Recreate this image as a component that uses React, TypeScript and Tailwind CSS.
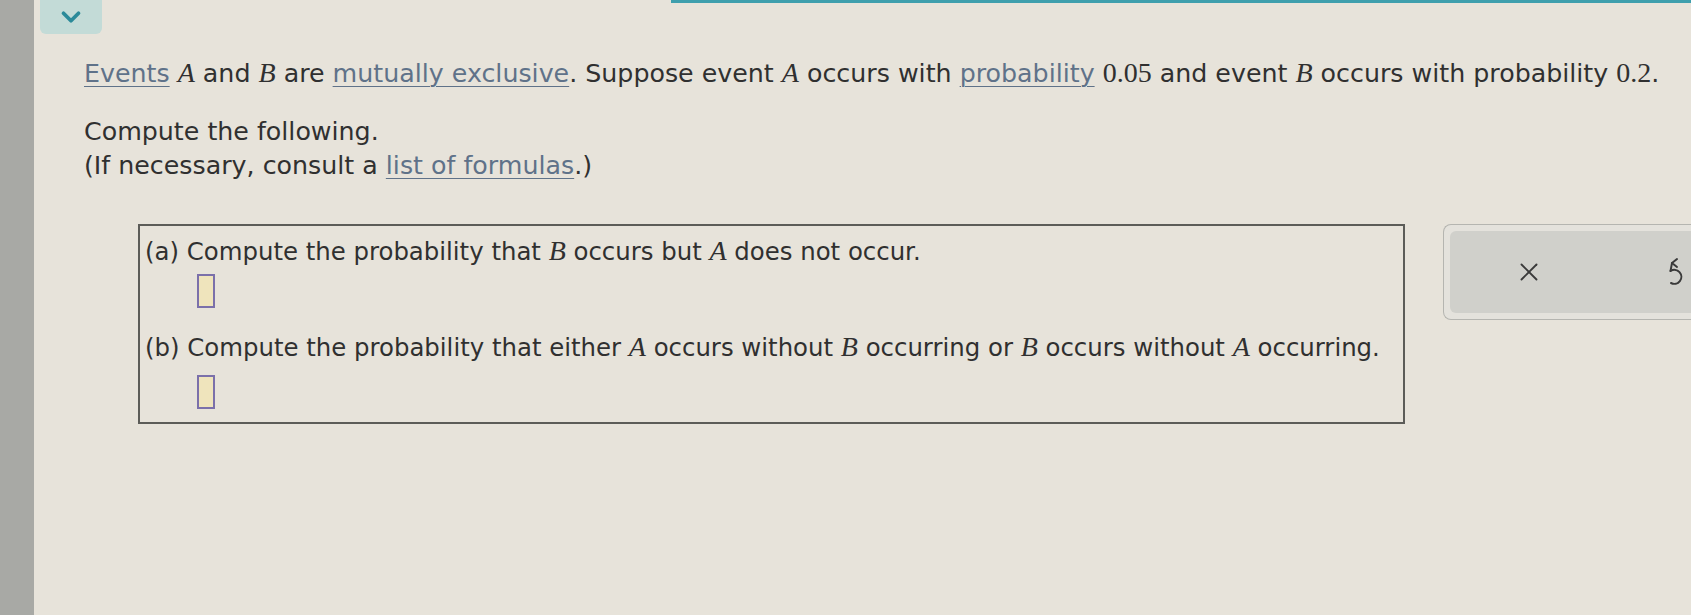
import { ChevronDown, X } from 'lucide-react';

// Math symbols render in a serif italic, like the typeset variables in the original.
function V({ children }: { children: string }) {
  return <span className="font-['Liberation_Serif',serif] italic text-[28px]">{children}</span>;
}

function N({ children }: { children: string }) {
  return <span className="font-['Liberation_Serif',serif] text-[28px]">{children}</span>;
}

function Term({ children }: { children: string }) {
  return <span className="text-[#5f7289] underline decoration-1 underline-offset-4">{children}</span>;
}

function AnswerSlot() {
  return <div className="h-[34px] w-[18px] border-2 border-[#7b70aa] bg-[#efe4bc]" />;
}

function UndoIcon() {
  return (
    <svg width="20" height="30" viewBox="0 0 20 30" fill="none" stroke="#3a3a3a" strokeWidth="2" strokeLinecap="round" strokeLinejoin="round">
      <path d="M10 2 L5 6 L10 10" />
      <path d="M5 6 L3.5 14" />
      <path d="M3.5 14 A7 7 0 1 1 4 26" />
    </svg>
  );
}

export default function App() {
  return (
    <div className="flex h-[615px] w-[1691px] overflow-hidden bg-[#e7e3da] font-['DejaVu_Sans',sans-serif] text-[#303030]">
      <div className="w-[34px] shrink-0 bg-[#a8a9a5]" />
      <div className="flex min-w-0 flex-1 flex-col">
        <div className="flex h-[34px] items-start">
          <div className="ml-[6px] flex h-[34px] w-[62px] items-center justify-center rounded-b-md bg-[#c3dbd7]">
            <ChevronDown className="text-[#2b8a99]" size={30} strokeWidth={3} />
          </div>
          <div className="ml-auto h-[3px] w-[1020px] bg-[#3f9fad]" />
        </div>

        <div className="pl-[50px] pt-[22px] text-[25.3px] leading-[34px]">
          <p className="whitespace-nowrap">
            <Term>Events</Term> <V>A</V> and <V>B</V> are <Term>mutually exclusive</Term>. Suppose event <V>A</V> occurs with{' '}
            <Term>probability</Term> <N>0.05</N> and event <V>B</V> occurs with probability <N>0.2</N>.
          </p>
          <p className="mt-[24px]">Compute the following.</p>
          <p>
            (If necessary, consult a <Term>list of formulas</Term>.)
          </p>
        </div>

        <div className="mt-[41px] flex items-start pl-[104px]">
          <div className="h-[200px] w-[1267px] border-2 border-[#5c5c58] px-[5px] pt-[8px] text-[24.4px] leading-[34px]">
            <p className="whitespace-nowrap">
              (a) Compute the probability that <V>B</V> occurs but <V>A</V> does not occur.
            </p>
            <div className="mt-[5px] pl-[52px]">
              <AnswerSlot />
            </div>
            <p className="mt-[22px] whitespace-nowrap">
              (b) Compute the probability that either <V>A</V> occurs without <V>B</V> occurring or <V>B</V> occurs without{' '}
              <V>A</V> occurring.
            </p>
            <div className="mt-[10px] pl-[52px]">
              <AnswerSlot />
            </div>
          </div>

          <div className="ml-[38px] flex-1 rounded-l-lg border border-r-0 border-[#b5b5b0] bg-[#e4e2dc] py-[6px] pl-[6px]">
            <div className="flex h-[82px] items-center rounded-l-md bg-[#d0d0cb] pl-[64px]">
              <X className="text-[#3a3a3a]" size={30} strokeWidth={1.5} />
              <div className="ml-auto mr-[4px]">
                <UndoIcon />
              </div>
            </div>
          </div>
        </div>
      </div>
    </div>
  );
}
